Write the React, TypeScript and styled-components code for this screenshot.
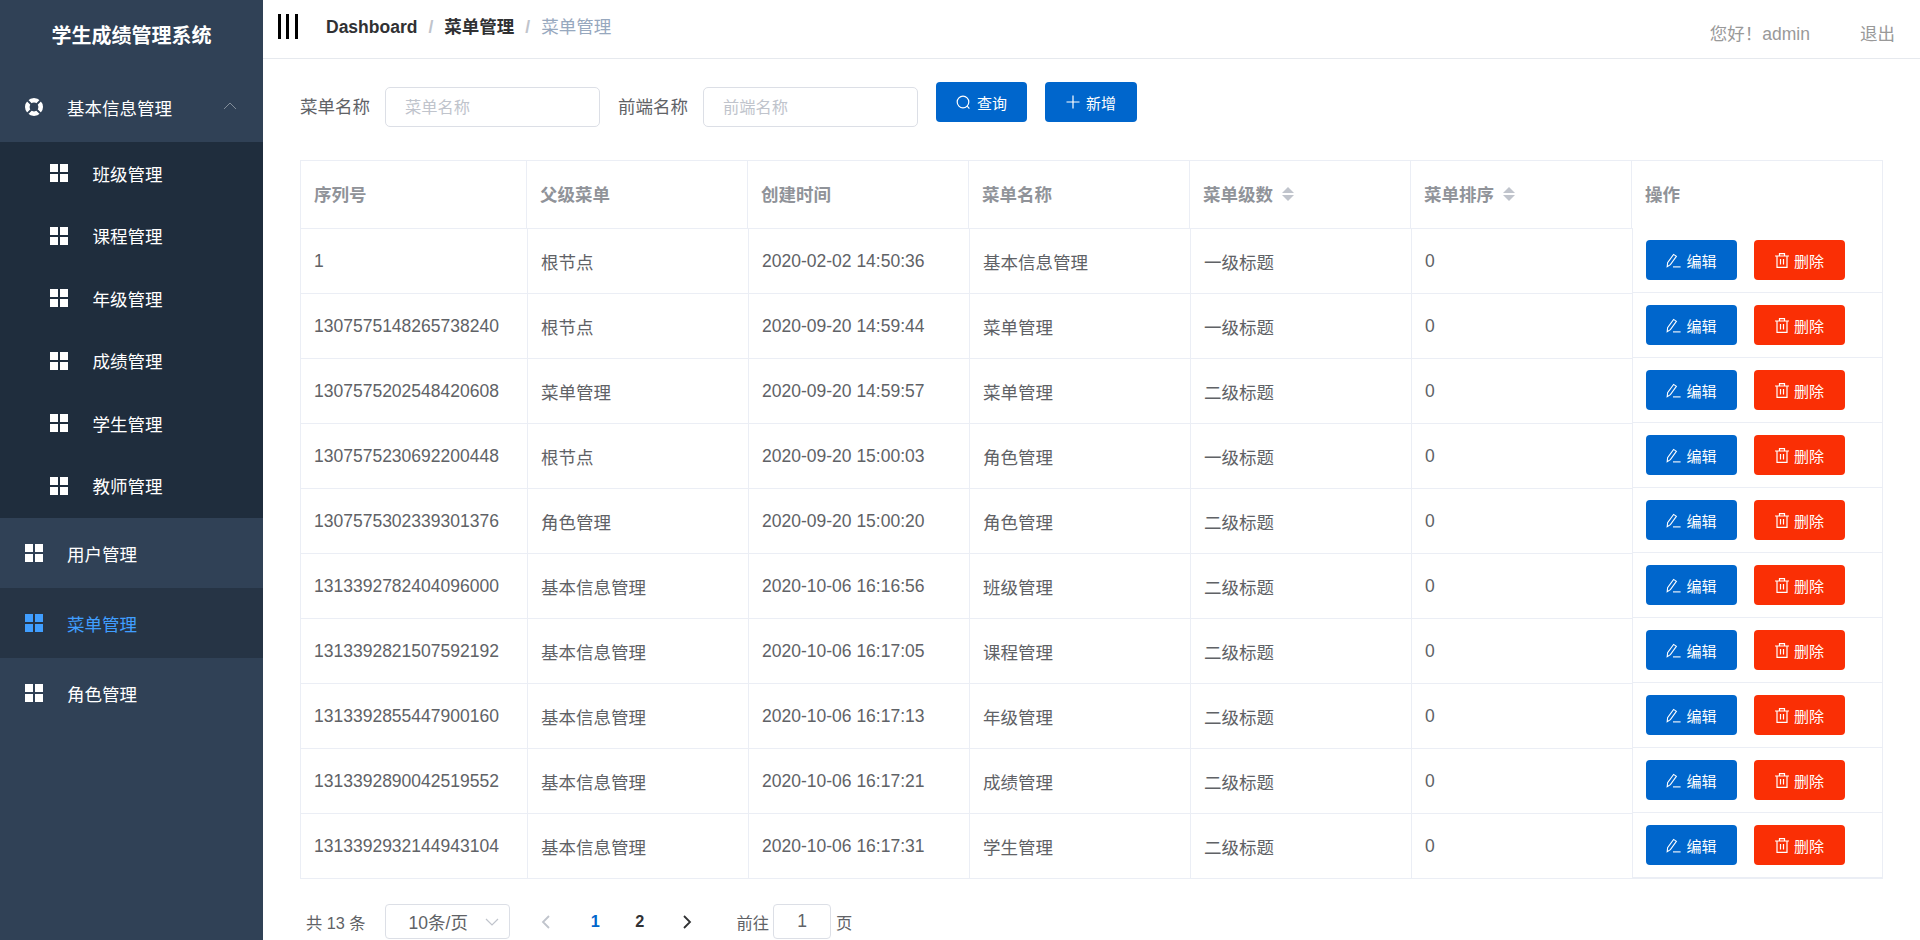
import React from "react";
import styled, { createGlobalStyle } from "styled-components";

const GlobalStyle = createGlobalStyle`
  html, body {
    margin: 0;
    padding: 0;
    height: 100%;
    overflow: hidden;
  }
  body {
    font-family: "Liberation Sans", "Noto Sans CJK SC", sans-serif;
    font-size: 17.5px;
    color: #606266;
    background: #fff;
  }
  * {
    box-sizing: border-box;
  }
`;

const subMenus = ["班级管理", "课程管理", "年级管理", "成绩管理", "学生管理", "教师管理"];

const rows = [
  ["1", "根节点", "2020-02-02 14:50:36", "基本信息管理", "一级标题", "0"],
  ["1307575148265738240", "根节点", "2020-09-20 14:59:44", "菜单管理", "一级标题", "0"],
  ["1307575202548420608", "菜单管理", "2020-09-20 14:59:57", "菜单管理", "二级标题", "0"],
  ["1307575230692200448", "根节点", "2020-09-20 15:00:03", "角色管理", "一级标题", "0"],
  ["1307575302339301376", "角色管理", "2020-09-20 15:00:20", "角色管理", "二级标题", "0"],
  ["1313392782404096000", "基本信息管理", "2020-10-06 16:16:56", "班级管理", "二级标题", "0"],
  ["1313392821507592192", "基本信息管理", "2020-10-06 16:17:05", "课程管理", "二级标题", "0"],
  ["1313392855447900160", "基本信息管理", "2020-10-06 16:17:13", "年级管理", "二级标题", "0"],
  ["1313392890042519552", "基本信息管理", "2020-10-06 16:17:21", "成绩管理", "二级标题", "0"],
  ["1313392932144943104", "基本信息管理", "2020-10-06 16:17:31", "学生管理", "二级标题", "0"],
];

const GridIcon = ({ color = "#fff" }: { color?: string }) => (
  <svg width="18" height="18" viewBox="0 0 18 18" fill={color}>
    <rect x="0" y="0" width="8" height="8" />
    <rect x="10" y="0" width="8" height="8" />
    <rect x="0" y="10" width="8" height="8" />
    <rect x="10" y="10" width="8" height="8" />
  </svg>
);

const HelpIcon = () => (
  <svg width="18" height="18" viewBox="0 0 18 18">
    <circle cx="9" cy="9" r="9" fill="#fff" />
    <path d="M2 2l14 14M16 2L2 16" stroke="#304156" strokeWidth="1.8" />
    <circle cx="9" cy="9" r="4.400" fill="#304156" />
  </svg>
);

const SearchIcon = () => (
  <svg width="15" height="15" viewBox="0 0 15 15" fill="none" stroke="currentColor" strokeWidth="1.2">
    <circle cx="7" cy="7" r="5.800" />
    <path d="M11.200 11.200l2.200 2.400" />
  </svg>
);

const PlusIcon = () => (
  <svg width="14" height="14" viewBox="0 0 14 14" fill="none" stroke="currentColor" strokeWidth="1.2">
    <path d="M7 .5v13M.5 7h13" />
  </svg>
);

const EditIcon = () => (
  <svg width="15" height="15" viewBox="0 0 15 15" fill="none" stroke="currentColor" strokeWidth="1.1">
    <path d="M1.200 13.600l.4-4L7.600 1.400l2.800 2-6 8.200z" />
    <path d="M7 13.900h7.600" />
  </svg>
);

const TrashIcon = () => (
  <svg width="14" height="15" viewBox="0 0 14 15" fill="none" stroke="currentColor" strokeWidth="1.2">
    <path d="M0 3h14M4.500 3V.7h5V3M2 3v11.400h10V3M5.500 6v5.500M8.500 6v5.500" />
  </svg>
);

const App: React.FC = () => {
  return (
    <Layout>
      <GlobalStyle />
      <Sidebar>
        <Logo>学生成绩管理系统</Logo>
        <MenuItem>
          <HelpIcon />
          <span>基本信息管理</span>
          <Chevron width="14" height="8" viewBox="0 0 14 8" fill="none" stroke="currentColor">
            <path d="M1 7l6-6 6 6" />
          </Chevron>
        </MenuItem>
        <SubMenu>
          {subMenus.map((name) => (
            <SubItem key={name}>
              <GridIcon />
              <span>{name}</span>
            </SubItem>
          ))}
        </SubMenu>
        <MenuItem>
          <GridIcon />
          <span>用户管理</span>
        </MenuItem>
        <MenuItem $active>
          <GridIcon color="#409eff" />
          <span>菜单管理</span>
        </MenuItem>
        <MenuItem>
          <GridIcon />
          <span>角色管理</span>
        </MenuItem>
      </Sidebar>

      <Main>
        <Header>
          <Hamburger width="20" height="25" viewBox="0 0 20 25" fill="#000">
            <rect x="0" y="0" width="3" height="25" />
            <rect x="8" y="0" width="3" height="25" />
            <rect x="17" y="0" width="3" height="25" />
          </Hamburger>
          <Crumbs>
            <Crumb>Dashboard</Crumb>
            <Slash>/</Slash>
            <Crumb>菜单管理</Crumb>
            <Slash>/</Slash>
            <Crumb $last>菜单管理</Crumb>
          </Crumbs>
          <UserBox>
            <span>您好！admin</span>
            <span>退出</span>
          </UserBox>
        </Header>

        <Content>
          <FilterBar>
            <FilterLabel>菜单名称</FilterLabel>
            <FilterInput placeholder="菜单名称" />
            <FilterLabel $second>前端名称</FilterLabel>
            <FilterInput placeholder="前端名称" />
            <ActionButton $search>
              <SearchIcon />
              查询
            </ActionButton>
            <ActionButton>
              <PlusIcon />
              新增
            </ActionButton>
          </FilterBar>

          <Table>
            <ScrollPart>
              <HeaderRow>
                <HeadCell>序列号</HeadCell>
                <HeadCell>父级菜单</HeadCell>
                <HeadCell>创建时间</HeadCell>
                <HeadCell>菜单名称</HeadCell>
                <HeadCell>
                  菜单级数
                  <SortCaret />
                </HeadCell>
                <HeadCell>
                  菜单排序
                  <SortCaret />
                </HeadCell>
              </HeaderRow>
              {rows.map((row) => (
                <BodyRow key={row[0]}>
                  {row.map((value, i) => (
                    <BodyCell key={i}>{value}</BodyCell>
                  ))}
                </BodyRow>
              ))}
            </ScrollPart>
            <FixedPart>
              <FixedHead>操作</FixedHead>
              {rows.map((row) => (
                <FixedRow key={row[0]}>
                  <RowButton>
                    <EditIcon />
                    编辑
                  </RowButton>
                  <RowButton $danger>
                    <TrashIcon />
                    删除
                  </RowButton>
                </FixedRow>
              ))}
            </FixedPart>
          </Table>

          <Pagination>
            <span>共 13 条</span>
            <PageSize>
              10条/页
              <svg width="14" height="8" viewBox="0 0 14 8" fill="none" stroke="#c0c4cc" strokeWidth="1.2">
                <path d="M1 1l6 6 6-6" />
              </svg>
            </PageSize>
            <PageButton $prev>
              <svg width="9" height="14" viewBox="0 0 9 14" fill="none" stroke="#c0c4cc" strokeWidth="1.8">
                <path d="M8 1L2 7l6 6" />
              </svg>
            </PageButton>
            <PageButton $active>1</PageButton>
            <PageButton>2</PageButton>
            <PageButton $next>
              <svg width="9" height="14" viewBox="0 0 9 14" fill="none" stroke="#303133" strokeWidth="1.8">
                <path d="M1 1l6 6-6 6" />
              </svg>
            </PageButton>
            <JumpLabel>前往</JumpLabel>
            <JumpInput>1</JumpInput>
            <PageUnit>页</PageUnit>
          </Pagination>
        </Content>
      </Main>
    </Layout>
  );
};

export default App;

const Layout = styled.div`
  display: flex;
  width: 1920px;
  height: 940px;
  overflow: hidden;
`;

const Sidebar = styled.aside`
  flex: 0 0 263px;
  background: #304156;
  color: #fff;
`;

const Logo = styled.div`
  height: 72px;
  padding-bottom: 4px;
  display: flex;
  align-items: center;
  justify-content: center;
  font-size: 20px;
  font-weight: 700;
`;

const MenuItem = styled.div<{ $active?: boolean }>`
  position: relative;
  height: 70px;
  padding-left: 25px;
  display: flex;
  align-items: center;
  gap: 24px;
  background: ${(p) => (p.$active ? "#263445" : "transparent")};
  color: ${(p) => (p.$active ? "#409eff" : "#fff")};
`;

const Chevron = styled.svg`
  position: absolute;
  right: 26px;
  top: 30px;
  color: rgba(255, 255, 255, 0.4);
`;

const SubMenu = styled.div`
  padding-bottom: 1px;
  background: #1f2d3d;
`;

const SubItem = styled.div`
  height: 62.5px;
  padding-left: 50px;
  display: flex;
  align-items: center;
  gap: 24.5px;
`;

const Main = styled.main`
  flex: 1;
  min-width: 0;
  display: flex;
  flex-direction: column;
`;

const Header = styled.header`
  flex: 0 0 59px;
  display: flex;
  align-items: flex-start;
  border-bottom: 1px solid #e6e9ee;
  padding-left: 15px;
  padding-right: 25px;
`;

const Hamburger = styled.svg`
  margin-top: 14px;
`;

const Crumbs = styled.div`
  margin-left: 28px;
  margin-top: 16px;
  display: flex;
  align-items: center;
  line-height: 22px;
`;

const Crumb = styled.span<{ $last?: boolean }>`
  font-weight: ${(p) => (p.$last ? 400 : 700)};
  color: ${(p) => (p.$last ? "#97a8be" : "#303133")};
`;

const Slash = styled.span`
  margin: 0 11px;
  color: #c0c4cc;
  font-weight: 700;
`;

const UserBox = styled.div`
  margin-left: auto;
  margin-top: 23px;
  display: flex;
  gap: 50px;
  color: #999;
  line-height: 22px;
`;

const Content = styled.div`
  flex: 1;
  padding: 23px 37px 0;
`;

const FilterBar = styled.div`
  display: flex;
  align-items: flex-start;
  height: 78px;
`;

const FilterLabel = styled.label<{ $second?: boolean }>`
  margin-top: 5px;
  margin-left: ${(p) => (p.$second ? "18px" : "0")};
  margin-right: 15px;
  line-height: 40px;
`;

const FilterInput = styled.input`
  margin-top: 5px;
  width: 215px;
  height: 40px;
  padding: 0 19px;
  border: 1px solid #dcdfe6;
  border-radius: 5px;
  outline: none;
  font-family: inherit;
  font-size: 16.25px;

  &::placeholder {
    color: #c0c4cc;
  }
`;

const ActionButton = styled.button<{ $search?: boolean }>`
  display: inline-flex;
  align-items: center;
  justify-content: center;
  gap: 6px;
  width: ${(p) => (p.$search ? "91px" : "92px")};
  height: 40px;
  margin-left: 18px;
  border: none;
  border-radius: 4px;
  background: #0066cc;
  color: #fff;
  font-family: inherit;
  font-size: 15px;
`;

const Table = styled.div`
  display: flex;
  width: 1583px;
  border-top: 1px solid #ebeef5;
  border-left: 1px solid #ebeef5;
  border-right: 1px solid #ebeef5;
  overflow: hidden;
`;

const ScrollPart = styled.div`
  flex: 0 0 1332px;
  overflow: hidden;
`;

const HeaderRow = styled.div`
  display: grid;
  grid-template-columns: 226px repeat(5, 221px);
  height: 68px;
  border-bottom: 1px solid #ebeef5;
`;

const HeadCell = styled.div`
  display: flex;
  align-items: center;
  padding: 0 0 2px 13px;
  border-right: 1px solid #ebeef5;
  font-weight: 700;
  color: #909399;
`;

const SortCaret = styled.i`
  position: relative;
  width: 12px;
  height: 14px;
  margin-left: 9px;

  &::before,
  &::after {
    content: "";
    position: absolute;
    left: 0;
    border-left: 6px solid transparent;
    border-right: 6px solid transparent;
  }
  &::before {
    top: 0;
    border-bottom: 6px solid #c0c4cc;
  }
  &::after {
    bottom: 0;
    border-top: 6px solid #c0c4cc;
  }
`;

const BodyRow = styled.div`
  display: grid;
  grid-template-columns: 227px repeat(5, 221px);
  height: 65px;
  border-bottom: 1px solid #ebeef5;
`;

const BodyCell = styled.div`
  display: flex;
  align-items: center;
  padding-left: 13px;
  border-right: 1px solid #ebeef5;
`;

const FixedPart = styled.div`
  flex: 1;
  border-bottom: 1px solid #ebeef5;
`;

const FixedHead = styled.div`
  height: 67px;
  padding: 0 0 2px 12px;
  display: flex;
  align-items: center;
  font-weight: 700;
  color: #909399;
`;

const FixedRow = styled.div`
  height: 65px;
  padding-left: 13px;
  display: flex;
  align-items: center;
  gap: 17px;
  border-bottom: 1px solid #ebeef5;
`;

const RowButton = styled.button<{ $danger?: boolean }>`
  display: inline-flex;
  align-items: center;
  justify-content: center;
  gap: 5px;
  width: 91px;
  height: 40px;
  border: none;
  border-radius: 4px;
  background: ${(p) => (p.$danger ? "#fa2f05" : "#0066cc")};
  color: #fff;
  font-family: inherit;
  font-size: 15px;
`;

const Pagination = styled.div`
  display: flex;
  align-items: center;
  height: 35px;
  margin-top: 25px;
  padding-left: 6px;
  font-size: 16.25px;
`;

const PageSize = styled.div`
  display: flex;
  align-items: center;
  justify-content: space-between;
  width: 125px;
  height: 35px;
  margin-left: 19px;
  padding: 0 10px 0 23px;
  border: 1px solid #dcdfe6;
  border-radius: 4px;
  font-size: 17.5px;
`;

const PageButton = styled.div<{ $active?: boolean; $prev?: boolean; $next?: boolean }>`
  display: flex;
  align-items: center;
  justify-content: center;
  width: 44.5px;
  height: 35px;
  margin-left: ${(p) => (p.$prev ? "14px" : p.$next ? "3px" : "0")};
  margin-right: ${(p) => (p.$prev ? "5px" : "0")};
  font-weight: 700;
  color: ${(p) => (p.$active ? "#0066cc" : "#303133")};
`;

const JumpLabel = styled.span`
  margin-left: 27px;
`;

const JumpInput = styled.div`
  display: flex;
  align-items: center;
  justify-content: center;
  width: 58px;
  height: 35px;
  margin-left: 4px;
  border: 1px solid #dcdfe6;
  border-radius: 4px;
  font-size: 17.5px;
`;

const PageUnit = styled.span`
  margin-left: 5px;
`;
